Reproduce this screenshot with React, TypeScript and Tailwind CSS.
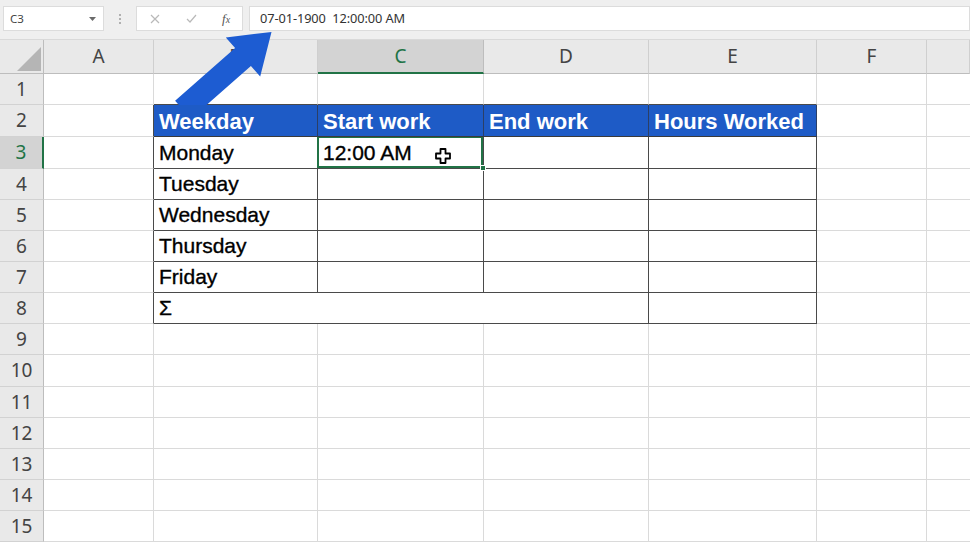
import React from 'react';

const ROW_H = [
  'h-[31px]', 'h-[32px]', 'h-[32px]', 'h-[31px]', 'h-[31px]', 'h-[31px]', 'h-[31px]', 'h-[31px]',
  'h-[31px]', 'h-[32px]', 'h-[31px]', 'h-[31px]', 'h-[31px]', 'h-[31px]', 'h-[31px]',
];

const COLS = ['A', 'B', 'C', 'D', 'E', 'F', ''];

const BODY: Record<number, string[]> = {
  3: ['Monday', '12:00 AM', '', ''],
  4: ['Tuesday', '', '', ''],
  5: ['Wednesday', '', '', ''],
  6: ['Thursday', '', '', ''],
  7: ['Friday', '', '', ''],
};

const HEAD = ['Weekday', 'Start work', 'End work', 'Hours Worked'];

function RowHeader({ r, h }: { r: number; h: string }) {
  const sel = r === 3;
  return (
    <div
      className={
        h +
        ' flex items-center justify-center text-[19px] border-b border-b-[#d2d2d2] ' +
        (sel
          ? 'bg-[#d3d3d3] text-[#217346] border-r-2 border-r-[#217346]'
          : 'bg-[#e9e9e9] text-[#444444] border-r border-r-[#bdbdbd]')
      }
      style={{ fontFamily: '"Noto Sans", sans-serif' }}
    >
      {r}
    </div>
  );
}

function Cursor() {
  return (
    <svg className="absolute left-[117px] top-[11px] w-[16px] h-[16px]" viewBox="0 0 16 16">
      <path
        d="M5.5 1 H10.5 V5.5 H15 V10.5 H10.5 V15 H5.5 V10.5 H1 V5.5 H5.5 Z"
        fill="#ffffff"
        stroke="#000000"
        strokeWidth="1.8"
        strokeLinejoin="round"
      />
    </svg>
  );
}

const BODY_TXT =
  ' relative flex items-center pl-[5px] text-[21px] text-black whitespace-nowrap [-webkit-text-stroke:0.35px_#000]';

function GridRow({ r }: { r: number }) {
  const h = ROW_H[r - 1];
  const inTable = r >= 2 && r <= 8;
  const cells: React.ReactNode[] = [];
  cells.push(<RowHeader key="rh" r={r} h={h} />);

  cells.push(
    <div
      key="A"
      className={
        h +
        ' border-b border-b-[#dadada] border-r ' +
        (inTable ? 'border-r-[#4a4a4a]' : 'border-r-[#dadada]')
      }
    />
  );

  if (r === 2) {
    HEAD.forEach((t, i) => {
      cells.push(
        <div
          key={'h' + i}
          className={
            h +
            ' relative z-10 bg-[#1e5bc6] text-white font-bold text-[22px] flex items-center pl-[5px] pt-[1px] whitespace-nowrap border-r border-r-[#2b3f66] border-b border-b-[#3a3a3a]'
          }
        >
          {t}
        </div>
      );
    });
  } else if (r === 8) {
    cells.push(
      <div
        key="m"
        className={h + ' col-span-3 border-r border-r-[#4a4a4a] border-b border-b-[#4a4a4a]' + BODY_TXT}
      >
        Σ
      </div>
    );
    cells.push(<div key="e8" className={h + ' border-r border-r-[#4a4a4a] border-b border-b-[#4a4a4a]'} />);
  } else if (inTable) {
    const data = BODY[r];
    data.forEach((t, i) => {
      const sel = r === 3 && i === 1;
      cells.push(
        <div
          key={'b' + i}
          className={h + ' border-r border-r-[#4a4a4a] border-b border-b-[#4a4a4a]' + BODY_TXT}
        >
          {t}
          {sel && (
            <>
              <div className="absolute left-[-1px] top-[-1px] right-0 bottom-0 border-2 border-[#217346]" />
              <div className="absolute right-[-3px] bottom-[-3px] w-[6px] h-[6px] bg-[#217346] border border-white z-20" />
              <Cursor />
            </>
          )}
        </div>
      );
    });
  } else {
    for (let i = 0; i < 4; i++) {
      cells.push(
        <div
          key={'b' + i}
          className={
            h +
            ' border-r border-r-[#dadada] border-b ' +
            (r === 1 ? 'border-b-[#4a4a4a]' : 'border-b-[#dadada]')
          }
        />
      );
    }
  }

  cells.push(<div key="F" className={h + ' border-r border-r-[#dadada] border-b border-b-[#dadada]'} />);
  cells.push(<div key="G" className={h + ' border-b border-b-[#dadada]'} />);

  return <>{cells}</>;
}

export default function App() {
  return (
    <div
      className="relative w-[970px] h-[546px] overflow-hidden bg-white"
      style={{ fontFamily: '"Liberation Sans", Arial, sans-serif' }}
    >
      {/* Formula bar */}
      <div
        className="h-[40px] bg-[#efefef] flex items-start pt-[6px] border-b border-b-[#d9d9d9]"
        style={{ fontFamily: '"Noto Sans", sans-serif' }}
      >
        <div className="ml-[3px] w-[101px] h-[25px] bg-white border border-[#dcdcdc] flex items-center justify-between pl-[6px] pr-[7px]">
          <span className="text-[11.5px] text-[#444444]">C3</span>
          <svg className="w-[7px] h-[4px]" viewBox="0 0 7 4">
            <path d="M0 0 H7 L3.5 4 Z" fill="#6a6a6a" />
          </svg>
        </div>
        <div className="w-[32px] h-[25px] flex flex-col items-center justify-center gap-[2px]">
          <div className="w-[2px] h-[2px] bg-[#b0b0b0]" />
          <div className="w-[2px] h-[2px] bg-[#b0b0b0]" />
          <div className="w-[2px] h-[2px] bg-[#b0b0b0]" />
        </div>
        <div className="w-[107px] h-[25px] bg-white border border-[#dcdcdc] flex items-center">
          <svg className="ml-[13px] w-[10px] h-[10px]" viewBox="0 0 10 10">
            <path d="M1 1 L9 9 M9 1 L1 9" stroke="#b9b9b9" strokeWidth="1.2" />
          </svg>
          <svg className="ml-[26px] w-[11px] h-[9px]" viewBox="0 0 11 9">
            <path d="M1 5 L4 8 L10 1" stroke="#b9b9b9" strokeWidth="1.2" fill="none" />
          </svg>
          <span
            className="ml-[25px] text-[13px] italic text-[#555555]"
            style={{ fontFamily: '"Liberation Serif", serif' }}
          >
            f<span className="text-[10px]">x</span>
          </span>
        </div>
        <div className="ml-[6px] flex-1 h-[25px] bg-white border border-[#dcdcdc] flex items-center pl-[10px]">
          <span className="text-[12.8px] text-[#333333] whitespace-pre tracking-[-0.1px]">07-01-1900  12:00:00 AM</span>
        </div>
      </div>

      {/* Grid */}
      <div className="grid grid-cols-[44px_110px_164px_166px_165px_168px_110px_1fr]">
        <div className="relative h-[34px] bg-[#e9e9e9] border-r border-r-[#bdbdbd] border-b border-b-[#bdbdbd]">
          <svg className="absolute left-[17px] top-[7px] w-[24px] h-[24px]" viewBox="0 0 24 24">
            <path d="M24 0 V24 H0 Z" fill="#b5b5b5" />
          </svg>
        </div>
        {COLS.map((c, i) => {
          const sel = c === 'C';
          return (
            <div
              key={'ch' + i}
              className={
                'h-[34px] flex items-center justify-center text-[19px] ' +
                (sel
                  ? 'bg-[#d3d3d3] text-[#217346] border-b-2 border-b-[#217346] border-r border-r-[#bdbdbd]'
                  : 'bg-[#e9e9e9] text-[#444444] border-b border-b-[#bdbdbd] border-r border-r-[#cfcfcf]')
              }
              style={{ fontFamily: '"Noto Sans", sans-serif' }}
            >
              {c}
            </div>
          );
        })}
        {Array.from({ length: 15 }, (_, k) => (
          <GridRow key={k} r={k + 1} />
        ))}
      </div>

      {/* Blue arrow */}
      <svg
        className="absolute left-0 top-0 w-[300px] h-[130px] z-[5] pointer-events-none"
        viewBox="0 0 300 130"
      >
        <polygon
          points="271.5,31.9 260.2,76.5 250.9,66 190.9,118.8 175.1,100.8 235.1,48 225.8,37.5"
          fill="#1d5cd2"
        />
      </svg>
    </div>
  );
}
